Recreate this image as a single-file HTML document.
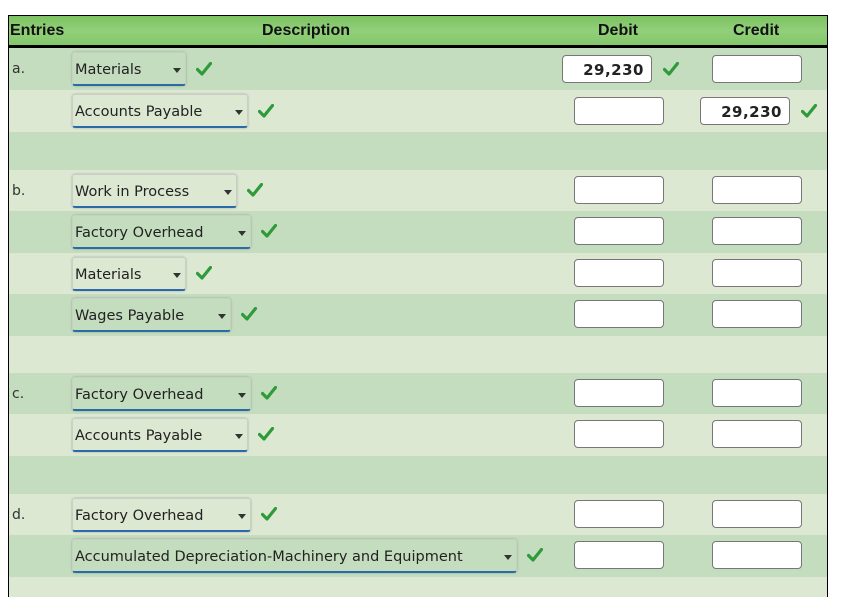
<!DOCTYPE html>
<html><head><meta charset="utf-8"><style>
*{box-sizing:border-box;margin:0;padding:0}
html,body{width:845px;height:597px;overflow:hidden}
body{background:#fff;position:relative;font-family:"DejaVu Sans","Liberation Sans",sans-serif;}
#t{position:absolute;left:8px;top:15px;width:820px;height:582px;border-left:1px solid #000;border-right:1px solid #000;border-top:1px solid #000;overflow:hidden}
.hd{position:absolute;left:0;top:0;width:100%;height:32px;background:linear-gradient(#7cc262,#92cf7a 50%,#84c76a);border-bottom:3px solid #000;font-family:"Liberation Sans",sans-serif;font-weight:bold;font-size:16px;color:#111;}
.hd span{position:absolute;top:6px}
.r{position:absolute;left:0;width:100%}
.d{background:#c5ddbf}.l{background:#dde8d3}
.lab{position:absolute;left:3px;font-size:14px;color:#333}
.sel{position:absolute;left:63px;height:34px;border:1px solid #c9cfc4;border-bottom:2px solid #2a6aa8;border-radius:3px;box-shadow:0 0 2px rgba(0,0,0,.25);font-size:14.5px;color:#222;padding:9px 0 0 2px;white-space:nowrap}
.sel:after{content:"";position:absolute;right:4px;top:15px;border-left:4px solid transparent;border-right:4px solid transparent;border-top:5px solid #333}
.ck{position:absolute;width:16px;height:14px}
.in{position:absolute;width:90px;height:28px;background:#fff;border:1px solid #777;border-radius:4px;font-weight:bold;font-size:15px;text-align:right;padding:5px 7px 0 0;color:#222;letter-spacing:.5px}
</style></head><body>
<svg width="0" height="0" style="position:absolute"><defs><symbol id="c" viewBox="0 0 16 14"><path d="M1.5 7.5 L6 12 L14.5 1.5" fill="none" stroke="#2e9a3a" stroke-width="3.2" stroke-linecap="round" stroke-linejoin="round"/></symbol></defs></svg>
<div id="t">
<div class="hd"><span style="left:1px">Entries</span><span style="left:253px">Description</span><span style="left:589px">Debit</span><span style="left:724px">Credit</span></div>

<div class="r d" style="top:32px;height:42px"><span class="lab" style="top:13px">a.</span><div class="sel" style="top:4px;width:114px">Materials</div><svg class="ck" style="left:187px;top:14px"><use href="#c"/></svg><div class="in" style="left:553px;top:7px">29,230</div><svg class="ck" style="left:654px;top:14px"><use href="#c"/></svg><div class="in" style="left:703px;top:7px"></div></div>
<div class="r l" style="top:74px;height:42px"><div class="sel" style="top:4px;width:176px">Accounts Payable</div><svg class="ck" style="left:249px;top:14px"><use href="#c"/></svg><div class="in" style="left:565px;top:7px"></div><div class="in" style="left:691px;top:7px">29,230</div><svg class="ck" style="left:792px;top:14px"><use href="#c"/></svg></div>
<div class="r d" style="top:116px;height:38px"></div>

<div class="r l" style="top:154px;height:41px"><span class="lab" style="top:13px">b.</span><div class="sel" style="top:4px;width:165px">Work in Process</div><svg class="ck" style="left:238px;top:13px"><use href="#c"/></svg><div class="in" style="left:565px;top:6px"></div><div class="in" style="left:703px;top:6px"></div></div>
<div class="r d" style="top:195px;height:42px"><div class="sel" style="top:4px;width:179px">Factory Overhead</div><svg class="ck" style="left:252px;top:13px"><use href="#c"/></svg><div class="in" style="left:565px;top:6px"></div><div class="in" style="left:703px;top:6px"></div></div>
<div class="r l" style="top:237px;height:41px"><div class="sel" style="top:4px;width:114px">Materials</div><svg class="ck" style="left:187px;top:13px"><use href="#c"/></svg><div class="in" style="left:565px;top:6px"></div><div class="in" style="left:703px;top:6px"></div></div>
<div class="r d" style="top:278px;height:42px"><div class="sel" style="top:4px;width:159px">Wages Payable</div><svg class="ck" style="left:232px;top:13px"><use href="#c"/></svg><div class="in" style="left:565px;top:6px"></div><div class="in" style="left:703px;top:6px"></div></div>
<div class="r l" style="top:320px;height:37px"></div>

<div class="r d" style="top:357px;height:41px"><span class="lab" style="top:13px">c.</span><div class="sel" style="top:4px;width:179px">Factory Overhead</div><svg class="ck" style="left:252px;top:13px"><use href="#c"/></svg><div class="in" style="left:565px;top:6px"></div><div class="in" style="left:703px;top:6px"></div></div>
<div class="r l" style="top:398px;height:42px"><div class="sel" style="top:4px;width:176px">Accounts Payable</div><svg class="ck" style="left:249px;top:13px"><use href="#c"/></svg><div class="in" style="left:565px;top:6px"></div><div class="in" style="left:703px;top:6px"></div></div>
<div class="r d" style="top:440px;height:38px"></div>

<div class="r l" style="top:478px;height:41px"><span class="lab" style="top:13px">d.</span><div class="sel" style="top:4px;width:179px">Factory Overhead</div><svg class="ck" style="left:252px;top:13px"><use href="#c"/></svg><div class="in" style="left:565px;top:6px"></div><div class="in" style="left:703px;top:6px"></div></div>
<div class="r d" style="top:519px;height:42px"><div class="sel" style="top:4px;width:445px">Accumulated Depreciation-Machinery and Equipment</div><svg class="ck" style="left:518px;top:13px"><use href="#c"/></svg><div class="in" style="left:565px;top:6px"></div><div class="in" style="left:703px;top:6px"></div></div>
<div class="r l" style="top:561px;height:40px"></div>
</div>
</body></html>
